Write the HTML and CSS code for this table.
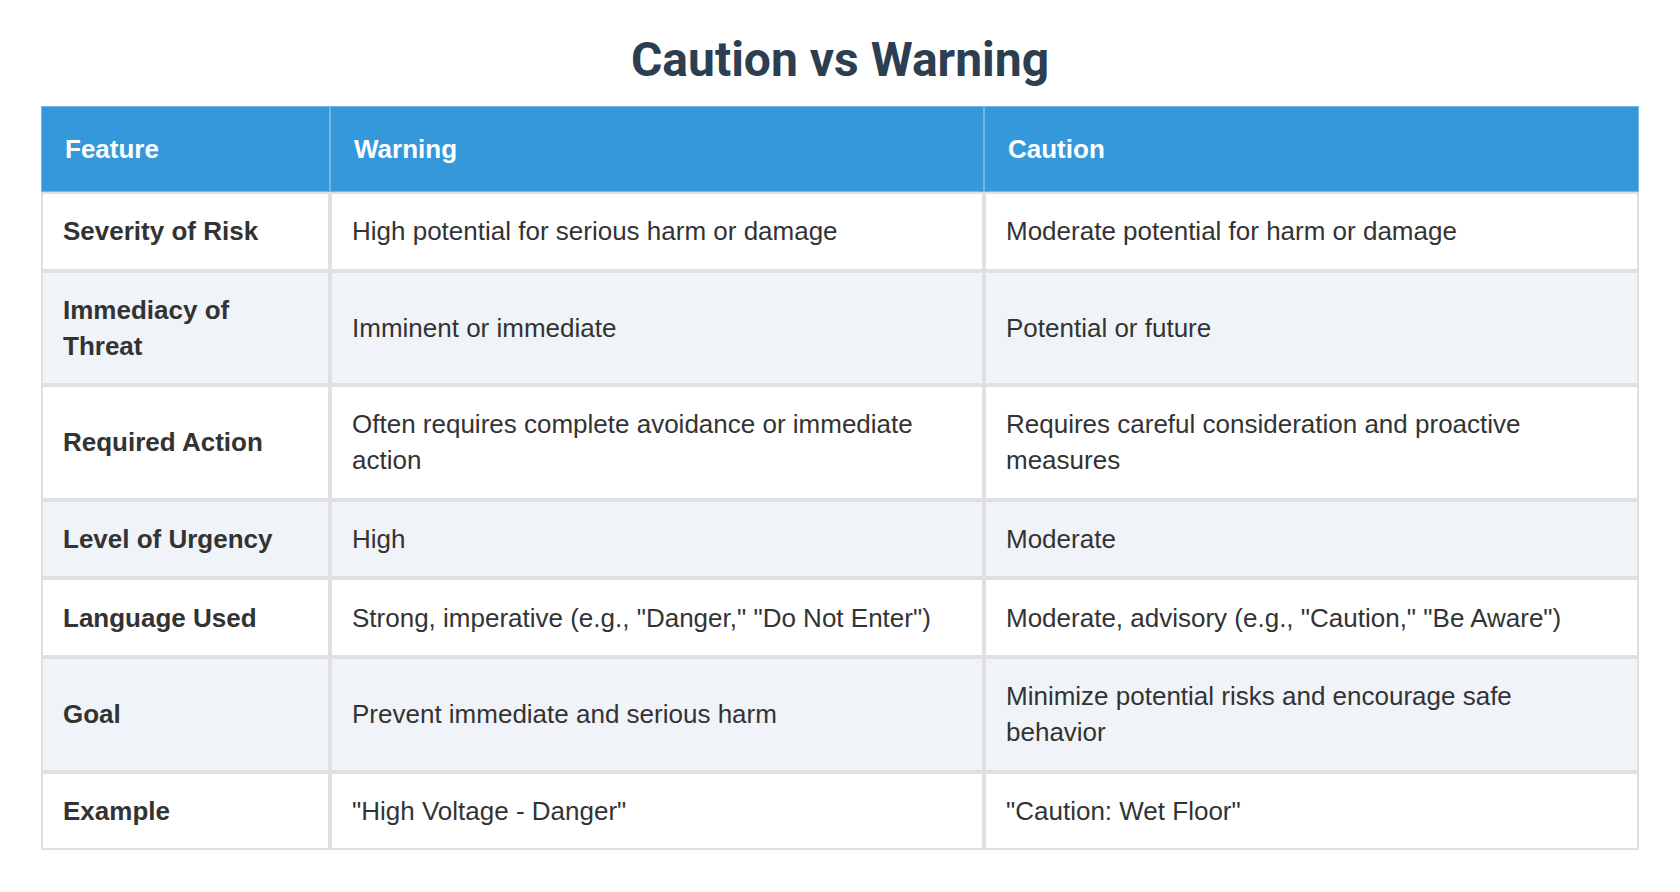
FILE: index.html
```html
<!DOCTYPE html>
<html lang="en">
<head>
<meta charset="utf-8">
<title>Caution vs Warning</title>
<link rel="stylesheet" href="styles.css">
</head>
<body>
<main class="page">
  <h1 class="title">Caution vs Warning</h1>
  <table class="compare">
    <colgroup>
      <col class="col-feature">
      <col class="col-warning">
      <col class="col-caution">
    </colgroup>
    <thead>
      <tr>
        <th>Feature</th>
        <th>Warning</th>
        <th>Caution</th>
      </tr>
    </thead>
    <tbody>
      <tr>
        <td class="feature">Severity of Risk</td>
        <td>High potential for serious harm or damage</td>
        <td>Moderate potential for harm or damage</td>
      </tr>
      <tr>
        <td class="feature">Immediacy of Threat</td>
        <td>Imminent or immediate</td>
        <td>Potential or future</td>
      </tr>
      <tr>
        <td class="feature">Required Action</td>
        <td>Often requires complete avoidance or immediate action</td>
        <td>Requires careful consideration and proactive measures</td>
      </tr>
      <tr>
        <td class="feature">Level of Urgency</td>
        <td>High</td>
        <td>Moderate</td>
      </tr>
      <tr>
        <td class="feature">Language Used</td>
        <td>Strong, imperative (e.g., "Danger," "Do Not Enter")</td>
        <td>Moderate, advisory (e.g., "Caution," "Be Aware")</td>
      </tr>
      <tr>
        <td class="feature">Goal</td>
        <td>Prevent immediate and serious harm</td>
        <td>Minimize potential risks and encourage safe behavior</td>
      </tr>
      <tr>
        <td class="feature">Example</td>
        <td>"High Voltage - Danger"</td>
        <td>"Caution: Wet Floor"</td>
      </tr>
    </tbody>
  </table>
</main>
</body>
</html>
```

FILE: styles.css
```css
html, body {
  margin: 0;
  padding: 0;
  background: #ffffff;
}

body {
  font-family: "Liberation Sans", Arial, sans-serif;
  color: #333333;
}

.page {
  padding: 32px 41px 0 41px;
}

.title {
  margin: 0 0 18px 0;
  font-family: Roboto, "Liberation Sans", sans-serif;
  font-weight: 700;
  font-size: 48px;
  line-height: 56px;
  color: #2c3e50;
  text-align: center;
}

.compare {
  width: 100%;
  table-layout: fixed;
  border-collapse: separate;
  border-spacing: 0;
  font-size: 26px;
  line-height: 36px;
}

.col-feature { width: 289px; }
.col-warning { width: 654px; }
.col-caution { width: 655px; }

.compare th {
  background: #3498db;
  color: #ffffff;
  font-weight: 700;
  text-align: left;
  padding: 24px 23px;
  border: 1px solid rgba(255, 255, 255, 0.3);
}

.compare td {
  padding: 19.3px 20px;
  border: 2px solid #e0e0e0;
  vertical-align: middle;
  background: #ffffff;
}

.compare tbody tr:nth-child(even) td {
  background: #f0f4f9;
}

.compare td.feature {
  font-weight: 700;
}
```
